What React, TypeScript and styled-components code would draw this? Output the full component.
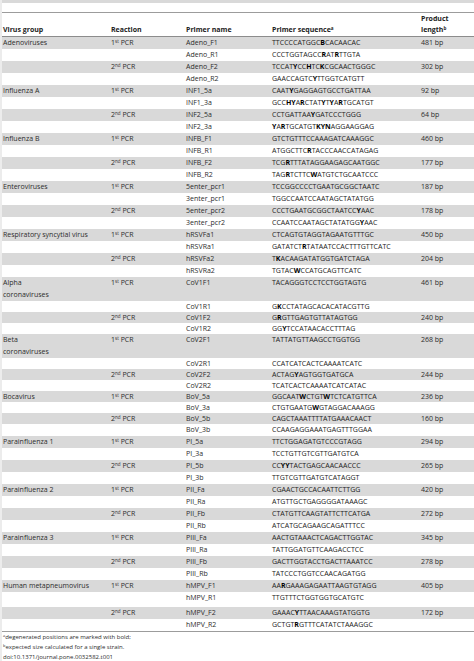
import React from 'react'
import styled, { createGlobalStyle } from 'styled-components'

const GlobalStyle = createGlobalStyle`
  html, body {
    margin: 0;
    padding: 0;
    background: #ffffff;
  }
  body {
    font-family: 'Open Sans', 'Liberation Sans', sans-serif;
    color: #2a2a2a;
  }
`

type Row = {
  group?: React.ReactNode
  pcr?: 1 | 2
  name: string
  seq: string
  len?: string
  h?: number
}

const rows: Row[] = [
  { group: 'Adenoviruses', pcr: 1, name: 'Adeno_F1', seq: 'TTCCCCATGGCBCACAACAC', len: '481 bp' },
  { name: 'Adeno_R1', seq: 'CCCTGGTAGCCRATRTTGTA' },
  { pcr: 2, name: 'Adeno_F2', seq: 'TCCATYCCHTCKCGCAACTGGGC', len: '302 bp' },
  { name: 'Adeno_R2', seq: 'GAACCAGTCYTTGGTCATGTT' },
  { group: 'Influenza A', pcr: 1, name: 'INF1_5a', seq: 'CAATYGAGGAGTGCCTGATTAA', len: '92 bp' },
  { name: 'INF1_3a', seq: 'GCCHYARCTATYTYARTGCATGT' },
  { pcr: 2, name: 'INF2_5a', seq: 'CCTGATTAAYGATCCCTGGG', len: '64 bp' },
  { name: 'INF2_3a', seq: 'YARTGCATGTKYNAGGAAGGAG' },
  { group: 'Influenza B', pcr: 1, name: 'INFB_F1', seq: 'GTCTGTTTCCAAAGATCAAAGGC', len: '460 bp' },
  { name: 'INFB_R1', seq: 'ATGGCTTCRTACCCAACCATAGAG' },
  { pcr: 2, name: 'INFB_F2', seq: 'TCGRTTTATAGGAAGAGCAATGGC', len: '177 bp' },
  { name: 'INFB_R2', seq: 'TAGRTCTTCWATGTCTGCAATCCC' },
  { group: 'Enteroviruses', pcr: 1, name: '5enter_pcr1', seq: 'TCCGGCCCCTGAATGCGGCTAATC', len: '187 bp' },
  { name: '3enter_pcr1', seq: 'TGGCCAATCCAATAGCTATATGG' },
  { pcr: 2, name: '5enter_pcr2', seq: 'CCCTGAATGCGGCTAATCCYAAC', len: '178 bp' },
  { name: '3enter_pcr2', seq: 'CCAATCCAATAGCTATATGGYAAC' },
  { group: 'Respiratory syncytial virus', pcr: 1, name: 'hRSVFa1', seq: 'CTCAGTGTAGGTAGAATGTTTGC', len: '450 bp' },
  { name: 'hRSVRa1', seq: 'GATATCTRTATAATCCACTTTGTTCATC' },
  { pcr: 2, name: 'hRSVFa2', seq: 'TKACAAGATATGGTGATCTAGA', len: '204 bp' },
  { name: 'hRSVRa2', seq: 'TGTACWCCATGCAGTTCATC' },
  {
    group: (
      <>
        Alpha
        <br />
        coronaviruses
      </>
    ),
    pcr: 1,
    name: 'CoV1F1',
    seq: 'TACAGGGTCCTCCTGGTAGTG',
    len: '461 bp',
  },
  { name: 'CoV1R1', seq: 'GKCCTATAGCACACATACGTTG', h: 11 },
  { pcr: 2, name: 'CoV1F2', seq: 'GRGTTGAGTGTTATAGTGG', len: '240 bp', h: 11 },
  { name: 'CoV1R2', seq: 'GGYTCCATAACACCTTTAG', h: 11 },
  {
    group: (
      <>
        Beta
        <br />
        coronaviruses
      </>
    ),
    pcr: 1,
    name: 'CoV2F1',
    seq: 'TATTATGTTAAGCCTGGTGG',
    len: '268 bp',
  },
  { name: 'CoV2R1', seq: 'CCATCATCACTCAAAATCATC', h: 11 },
  { pcr: 2, name: 'CoV2F2', seq: 'ACTAGYAGTGGTGATGCA', len: '244 bp', h: 11 },
  { name: 'CoV2R2', seq: 'TCATCACTCAAAATCATCATAC', h: 11 },
  { group: 'Bocavirus', pcr: 1, name: 'BoV_5a', seq: 'GGCAATWCTGTWTCTCATGTTCA', len: '236 bp', h: 11 },
  { name: 'BoV_3a', seq: 'CTGTGAATGWGTAGGACAAAGG', h: 11 },
  { pcr: 2, name: 'BoV_5b', seq: 'CAGCTAAATTTTATGAAACAACT', len: '160 bp', h: 11 },
  { name: 'BoV_3b', seq: 'CCAAGAGGAAATGAGTTTGGAA' },
  { group: 'Parainfluenza 1', pcr: 1, name: 'PI_5a', seq: 'TTCTGGAGATGTCCCGTAGG', len: '294 bp' },
  { name: 'PI_3a', seq: 'TCCTGTTGTCGTTGATGTCA' },
  { pcr: 2, name: 'PI_5b', seq: 'CCYYTACTGAGCAACAACCC', len: '265 bp' },
  { name: 'PI_3b', seq: 'TTGTCGTTGATGTCATAGGT' },
  { group: 'Parainfluenza 2', pcr: 1, name: 'PII_Fa', seq: 'CGAACTGCCACAATTCTTGG', len: '420 bp' },
  { name: 'PII_Ra', seq: 'ATGTTGCTGAGGGGATAAAGC' },
  { pcr: 2, name: 'PII_Fb', seq: 'CTATGTTCAAGTATTCTTCATGA', len: '272 bp' },
  { name: 'PII_Rb', seq: 'ATCATGCAGAAGCAGATTTCC' },
  { group: 'Parainfluenza 3', pcr: 1, name: 'PIII_Fa', seq: 'AACTGTAAACTCAGACTTGGTAC', len: '345 bp' },
  { name: 'PIII_Ra', seq: 'TATTGGATGTTCAAGACCTCC' },
  { pcr: 2, name: 'PIII_Fb', seq: 'GACTTGGTACCTGACTTAAATCC', len: '278 bp' },
  { name: 'PIII_Rb', seq: 'TATCCCTGGTCCAACAGATGG' },
  { group: 'Human metapneumovirus', pcr: 1, name: 'hMPV_F1', seq: 'AARGAAAGAGAATTAAGTGTAGG', len: '405 bp' },
  { name: 'hMPV_R1', seq: 'TTGTTTCTGGTGGTGCATGTC', h: 15 },
  { pcr: 2, name: 'hMPV_F2', seq: 'GAAACYTTAACAAAGTATGGTG', len: '172 bp' },
  { name: 'hMPV_R2', seq: 'GCTGTRGTTTCATATCTAAAGGC' },
]

// degenerate bases (anything but A, C, G, T) are printed in bold
const Sequence = ({ value }: { value: string }) => (
  <>
    {value.split('').map((ch, i) => (/[ACGT]/.test(ch) ? ch : <Degenerate key={i}>{ch}</Degenerate>))}
  </>
)

const Reaction = ({ pcr }: { pcr: 1 | 2 }) => (
  <>
    {pcr}
    <Sup>{pcr === 1 ? 'st' : 'nd'}</Sup> PCR
  </>
)

export default function App() {
  return (
    <Page>
      <GlobalStyle />
      <TopBar />
      <Table>
        <HeadRow>
          <HeadCell>Virus group</HeadCell>
          <HeadCell>Reaction</HeadCell>
          <HeadCell>Primer name</HeadCell>
          <HeadCell>
            Primer sequence<Sup>a</Sup>
          </HeadCell>
          <HeadCell>
            Product
            <br />
            length<Sup>b</Sup>
          </HeadCell>
        </HeadRow>
        {rows.map((r, i) => (
          <BodyRow key={r.name} $shaded={i % 2 === 0} $h={r.h ?? 12}>
            <Cell>{r.group}</Cell>
            <Cell>{r.pcr && <Reaction pcr={r.pcr} />}</Cell>
            <Cell>{r.name}</Cell>
            <SeqCell>
              <Sequence value={r.seq} />
            </SeqCell>
            <Cell>{r.len}</Cell>
          </BodyRow>
        ))}
      </Table>
      <Notes>
        <Note>
          <Sup>a</Sup>degenerated positions are marked with bold;
        </Note>
        <Note>
          <Sup>b</Sup>expected size calculated for a single strain.
        </Note>
        <Note>doi:10.1371/journal.pone.0032582.t001</Note>
      </Notes>
    </Page>
  )
}

const columns = '108px 75px 86px 149px 1fr'

const Page = styled.div`
  width: 474px;
  border-left: 2px solid #ececec;
  box-sizing: border-box;
`
const TopBar = styled.div`
  height: 3px;
  background: #d9d9d9;
  margin-bottom: 9px;
`
const Table = styled.div`
  font-size: 7px;
  border-top: 1px solid #9c9c9c;
  border-bottom: 1px solid #9c9c9c;
`
const HeadRow = styled.div`
  display: grid;
  grid-template-columns: ${columns};
  align-items: end;
  height: 24px;
  padding-bottom: 2px;
  box-sizing: border-box;
  border-bottom: 1px solid #8c8c8c;
`
const HeadCell = styled.div`
  font-weight: 700;
  color: #222222;
  line-height: 11px;
  padding-left: 1px;
`
const BodyRow = styled.div<{ $shaded: boolean; $h: number }>`
  display: grid;
  grid-template-columns: ${columns};
  min-height: ${({ $h }) => $h}px;
  line-height: ${({ $h }) => Math.min($h, 12)}px;
  background: ${({ $shaded }) => ($shaded ? '#d9d9d9' : '#ffffff')};
`
const Cell = styled.div`
  padding-left: 1px;
  white-space: nowrap;
  color: #2c2c2c;
`
const SeqCell = styled(Cell)`
  color: #222222;
`
const Degenerate = styled.b`
  font-weight: 700;
  color: #000000;
`
const Sup = styled.sup`
  font-size: 0.65em;
  line-height: 0;
  vertical-align: 0.5em;
`
const Notes = styled.div`
  padding-left: 1px;
  font-size: 6px;
  line-height: 10px;
  color: #2c2c2c;
`
const Note = styled.div``
